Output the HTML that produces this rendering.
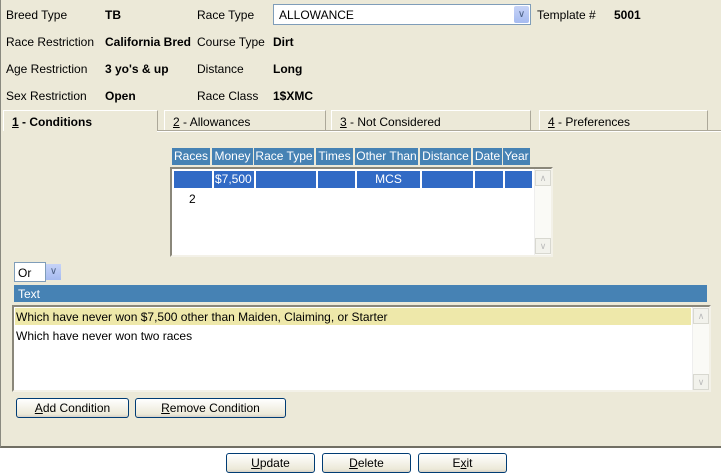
<!DOCTYPE html>
<html><head><meta charset="utf-8"><style>
*{box-sizing:border-box;margin:0;padding:0}
body{width:721px;height:476px;background:#fff;font-family:"Liberation Sans",Arial,sans-serif;font-size:12px;color:#000;position:relative;overflow:hidden}
.a{position:absolute;white-space:nowrap}
.b{font-weight:bold}
#bg{position:absolute;left:0;top:0;width:721px;height:448px;background:#ECE9D8;border-left:1px solid #8a8a80;border-bottom:2px solid #716f64}
.tab{position:absolute;top:110px;height:21px;border:1px solid #fff;border-right-color:#aca899;border-bottom:none;padding:4px 0 0 8px}
.hd{position:absolute;top:148px;height:17px;background:#4682b4;color:#fff;text-align:center;line-height:17px}
.cell{position:absolute;top:171px;height:17px;background:#316ac5;color:#fff;text-align:center;line-height:17px}
.btn{position:absolute;height:20px;border:1px solid #003c74;border-radius:3px;background:linear-gradient(#fff,#ece9d8 85%,#d6d0c5);text-align:center;line-height:18px}
.sb{position:absolute;width:17px;background:#fafaf6;border-left:1px solid #eee}
.arr{position:absolute;width:16px;height:16px;border:1px solid #d8d8d0;background:#f2f2ec;color:#bbb;font-size:9px;text-align:center;line-height:14px}
</style></head><body>
<div id="bg"></div>
<div class="a" style="left:6px;top:8px">Breed Type</div>
<div class="a b" style="left:105px;top:8px">TB</div>
<div class="a" style="left:197px;top:8px">Race Type</div>
<div class="a" style="left:273px;top:4px;width:258px;height:21px;background:#fff;border:1px solid #7f9db9;padding:3px 0 0 5px">ALLOWANCE</div>
<div class="a" style="left:514px;top:6px;width:15px;height:17px;background:linear-gradient(#c6d3f7,#a6bbf0);border-radius:2px;color:#4d6185;font-size:10px;text-align:center;line-height:17px">&#8744;</div>
<div class="a" style="left:537px;top:8px">Template #</div>
<div class="a b" style="left:614px;top:8px">5001</div>

<div class="a" style="left:6px;top:35px">Race Restriction</div>
<div class="a b" style="left:105px;top:35px">California Bred</div>
<div class="a" style="left:197px;top:35px">Course Type</div>
<div class="a b" style="left:273px;top:35px">Dirt</div>

<div class="a" style="left:6px;top:62px">Age Restriction</div>
<div class="a b" style="left:105px;top:62px">3 yo's &amp; up</div>
<div class="a" style="left:197px;top:62px">Distance</div>
<div class="a b" style="left:273px;top:62px">Long</div>

<div class="a" style="left:6px;top:89px">Sex Restriction</div>
<div class="a b" style="left:105px;top:89px">Open</div>
<div class="a" style="left:197px;top:89px">Race Class</div>
<div class="a b" style="left:273px;top:89px">1$XMC</div>

<div class="a" style="left:157px;top:130px;width:564px;height:1px;background:#aca899"></div>
<div class="a" style="left:157px;top:131px;width:564px;height:1px;background:#fff"></div>
<div class="tab b" style="left:3px;width:155px"><u>1</u> - Conditions</div>
<div class="tab" style="left:164px;width:162px;height:20px"><u>2</u> - Allowances</div>
<div class="tab" style="left:331px;width:200px;height:20px"><u>3</u> - Not Considered</div>
<div class="tab" style="left:539px;width:169px;height:20px"><u>4</u> - Preferences</div>

<div class="hd" style="left:172px;width:38px">Races</div>
<div class="hd" style="left:212px;width:41px">Money</div>
<div class="hd" style="left:254px;width:60px">Race Type</div>
<div class="hd" style="left:316px;width:37px">Times</div>
<div class="hd" style="left:355px;width:63px">Other Than</div>
<div class="hd" style="left:420px;width:51px">Distance</div>
<div class="hd" style="left:473px;width:29px">Date</div>
<div class="hd" style="left:503px;width:27px">Year</div>

<div class="a" style="left:170px;top:167px;width:383px;height:90px;background:#fff;border:2px solid #8a877a;border-right-color:#f3f1e8;border-bottom-color:#f3f1e8"></div>
<div class="cell" style="left:174px;width:38px"></div>
<div class="cell" style="left:214px;width:40px;text-align:left;padding-left:1px">$7,500</div>
<div class="cell" style="left:256px;width:60px"></div>
<div class="cell" style="left:318px;width:37px"></div>
<div class="cell" style="left:357px;width:63px">MCS</div>
<div class="cell" style="left:422px;width:51px"></div>
<div class="cell" style="left:475px;width:28px"></div>
<div class="cell" style="left:505px;width:27px"></div>
<div class="a" style="left:189px;top:192px">2</div>
<div class="sb" style="left:534px;top:169px;height:86px"></div>
<div class="arr" style="left:535px;top:170px">&#8743;</div>
<div class="arr" style="left:535px;top:238px">&#8744;</div>

<div class="a" style="left:14px;top:262px;width:32px;height:20px;background:#fff;border:1px solid #7f9db9;padding:3px 0 0 3px">Or</div>
<div class="a" style="left:46px;top:264px;width:15px;height:16px;background:linear-gradient(#c6d3f7,#a6bbf0);color:#4d6185;font-size:10px;text-align:center;line-height:16px">&#8744;</div>

<div class="a" style="left:14px;top:285px;width:693px;height:17px;background:#4682b4;color:#fff;padding:2px 0 0 4px">Text</div>
<div class="a" style="left:12px;top:305px;width:699px;height:87px;background:#fff;border:2px solid #8a877a;border-right-color:#f3f1e8;border-bottom-color:#f3f1e8"></div>
<div class="a" style="left:15px;top:308px;width:676px;height:17px;background:#eee8aa;padding:2px 0 0 1px">Which have never won $7,500 other than Maiden, Claiming, or Starter</div>
<div class="a" style="left:16px;top:329px">Which have never won two races</div>
<div class="sb" style="left:692px;top:307px;height:83px"></div>
<div class="arr" style="left:693px;top:308px">&#8743;</div>
<div class="arr" style="left:693px;top:374px">&#8744;</div>

<div class="btn" style="left:16px;top:398px;width:113px"><u>A</u>dd Condition</div>
<div class="btn" style="left:135px;top:398px;width:151px"><u>R</u>emove Condition</div>

<div class="btn" style="left:226px;top:453px;width:89px"><u>U</u>pdate</div>
<div class="btn" style="left:322px;top:453px;width:89px"><u>D</u>elete</div>
<div class="btn" style="left:418px;top:453px;width:89px">E<u>x</u>it</div>
</body></html>
